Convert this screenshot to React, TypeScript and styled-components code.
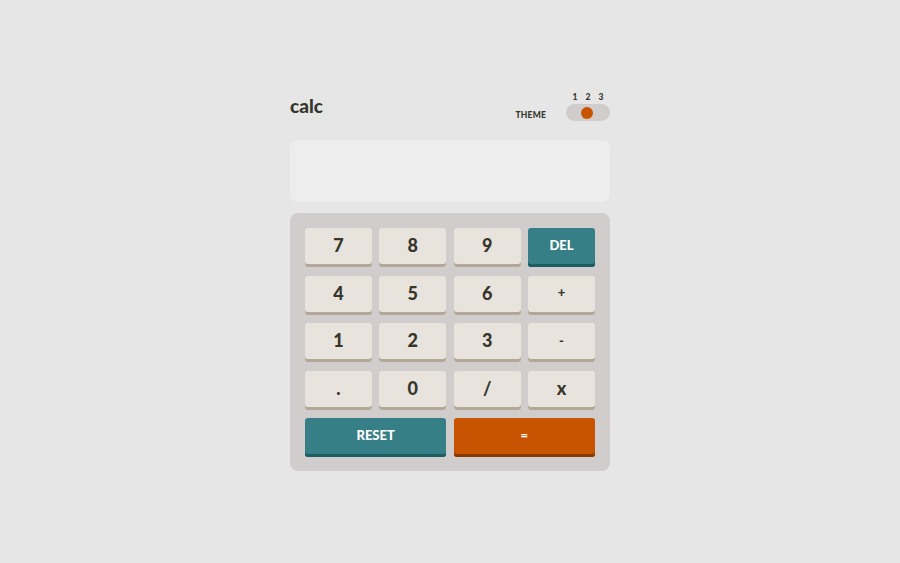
import React from "react";
import styled, { createGlobalStyle } from "styled-components";

const Global = createGlobalStyle`
  html, body { margin: 0; padding: 0; background: #e6e6e6; }
  body { font-family: "Lato", "Noto Sans", sans-serif; color: #36362c; }
`;

const Page = styled.div`
  width: 900px;
  height: 563px;
  display: flex;
  justify-content: center;
  padding-top: 90px;
  box-sizing: border-box;
`;

const Calculator = styled.div`
  width: 320px;
  display: flex;
  flex-direction: column;
`;

const Header = styled.header`
  display: flex;
  justify-content: space-between;
  align-items: flex-end;
  height: 31px;
`;

const Title = styled.h1`
  margin: 0 0 6px 0;
  font-size: 19px;
  font-weight: 900;
  letter-spacing: 0px;
  line-height: 1;
`;

const ThemeBox = styled.div`
  display: flex;
  align-items: flex-end;
  gap: 20px;
`;

const ThemeLabel = styled.span`
  font-size: 8.5px;
  font-weight: 900;
  letter-spacing: 0.2px;
  margin-bottom: 1px;
`;

const ToggleCol = styled.div`
  display: flex;
  flex-direction: column;
  align-items: center;
  gap: 2px;
`;

const Nums = styled.div`
  display: flex;
  justify-content: space-between;
  width: 31px;
  font-size: 8.5px;
  font-weight: 900;
  line-height: 10px;
`;

const Track = styled.div`
  width: 44px;
  height: 17px;
  border-radius: 9px;
  background: #d2cdcd;
  position: relative;
`;

const Knob = styled.span<{ $pos: number }>`
  position: absolute;
  top: 2.5px;
  left: ${(p) => 4 + p.$pos * 11}px;
  width: 12px;
  height: 12px;
  border-radius: 50%;
  background: #c85402;
`;

const Screen = styled.div`
  margin-top: 19px;
  height: 62px;
  border-radius: 8px;
  background: #ededed;
`;

const Keypad = styled.div`
  margin-top: 11px;
  border-radius: 8px;
  background: #d2cdcd;
  padding: 15px 15px 14px;
  display: grid;
  grid-template-columns: repeat(4, 1fr);
  grid-auto-rows: 39px;
  column-gap: 7.33px;
  row-gap: 8.5px;
`;

type Variant = "num" | "blue" | "red";

const colors: Record<Variant, { bg: string; sh: string; fg: string }> = {
  num: { bg: "#e8e3dd", sh: "#b3a897", fg: "#36362c" },
  blue: { bg: "#377f86", sh: "#1b5f65", fg: "#ffffff" },
  red: { bg: "#c85402", sh: "#873901", fg: "#ffffff" },
};

const Key = styled.button<{ $v: Variant; $wide?: boolean; $small?: boolean }>`
  grid-column: ${(p) => (p.$wide ? "span 2" : "auto")};
  border: none;
  border-radius: 3px;
  background: ${(p) => colors[p.$v].bg};
  box-shadow: inset 0 -3px 0 ${(p) => colors[p.$v].sh};
  color: ${(p) => colors[p.$v].fg};
  font-family: "Lato", "Noto Sans", sans-serif;
  font-weight: 900;
  font-size: ${(p) => (p.$small ? "13px" : "18px")};
  padding: 0 0 5px;
  display: flex;
  align-items: center;
  justify-content: center;
  line-height: 1;
`;

const keys: { label: string; v: Variant; small?: boolean }[] = [
  { label: "7", v: "num" },
  { label: "8", v: "num" },
  { label: "9", v: "num" },
  { label: "DEL", v: "blue", small: true },
  { label: "4", v: "num" },
  { label: "5", v: "num" },
  { label: "6", v: "num" },
  { label: "+", v: "num", small: true },
  { label: "1", v: "num" },
  { label: "2", v: "num" },
  { label: "3", v: "num" },
  { label: "-", v: "num", small: true },
  { label: ".", v: "num" },
  { label: "0", v: "num" },
  { label: "/", v: "num" },
  { label: "x", v: "num" },
];

export default function App() {
  return (
    <>
      <Global />
      <Page>
        <Calculator>
          <Header>
            <Title>calc</Title>
            <ThemeBox>
              <ThemeLabel>THEME</ThemeLabel>
              <ToggleCol>
                <Nums>
                  <span>1</span>
                  <span>2</span>
                  <span>3</span>
                </Nums>
                <Track>
                  <Knob $pos={1} />
                </Track>
              </ToggleCol>
            </ThemeBox>
          </Header>
          <Screen />
          <Keypad>
            {keys.map((k) => (
              <Key key={k.label} $v={k.v} $small={k.small}>
                {k.label}
              </Key>
            ))}
            <Key $v="blue" $wide $small>
              RESET
            </Key>
            <Key $v="red" $wide $small>
              =
            </Key>
          </Keypad>
        </Calculator>
      </Page>
    </>
  );
}
